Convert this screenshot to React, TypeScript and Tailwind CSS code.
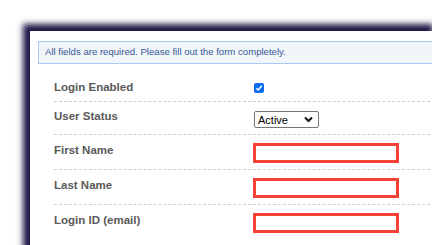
import { useState } from "react";

function Checkbox() {
  return (
    <span className="flex h-[10px] w-[10px] items-center justify-center rounded-[2px] bg-[#0b6ff0]">
      <svg width="8" height="8" viewBox="0 0 8 8">
        <path d="M1.3 4.2 L3.2 6 L6.8 1.8" fill="none" stroke="#fff" strokeWidth="1.5" />
      </svg>
    </span>
  );
}

function StatusSelect() {
  return (
    <div className="relative h-[17px] w-[65px] rounded-[2px] border border-[#767676] bg-white font-normal">
      <span className="absolute left-[3px] top-[1px] text-[11px] leading-[14px] text-black">Active</span>
      <svg className="absolute right-[5px] top-[4px]" width="9" height="7" viewBox="0 0 9 7">
        <path d="M1 1.5 L4.5 5 L8 1.5" fill="none" stroke="#111" strokeWidth="2" />
      </svg>
    </div>
  );
}

function TextField() {
  const [value, setValue] = useState("");
  return (
    <input
      value={value}
      onChange={(e) => setValue(e.target.value)}
      className="block h-[20px] w-[146px] border-[3px] border-[#f44336] bg-white px-1 text-[11px] font-normal outline-none"
    />
  );
}

const rows = [
  { label: "First Name" },
  { label: "Last Name" },
  { label: "Login ID (email)" },
];

export default function App() {
  return (
    <div className="h-[245px] w-[432px] overflow-hidden bg-white pl-[30px] pt-[31px] font-['Liberation_Sans',Arial,sans-serif]">
      <div className="h-[230px] w-[410px] bg-white pl-[8px] pt-[10px] shadow-[-7px_-7px_6px_#1d1846]">
        {/* notice */}
        <div className="flex h-[23px] w-[420px] items-center border border-[#a9c8f5] bg-[#f1f6fb] pl-[6px] text-[9.6px] text-[#3a5796]">
          All fields are required. Please fill out the form completely.
        </div>

        <div className="ml-[16px] mt-[7px] text-[11.5px] font-bold text-[#595959]">
          <div className="flex h-[31px] items-start border-b border-dashed border-[#cfcfcf]">
            <div className="w-[200px] pt-[9px] leading-[14px]">Login Enabled</div>
            <div className="pt-[12px]">
              <Checkbox />
            </div>
          </div>
          <div className="flex h-[33px] items-start border-b border-dashed border-[#cfcfcf]">
            <div className="w-[200px] pt-[7px] leading-[14px]">User Status</div>
            <div className="pt-[9px]">
              <StatusSelect />
            </div>
          </div>
          {rows.map((r, i) => (
            <div
              key={r.label}
              className={
                "flex h-[35px] items-start " +
                (i < rows.length - 1 ? "border-b border-dashed border-[#cfcfcf]" : "")
              }
            >
              <div className="w-[199px] pt-[8px] leading-[14px]">{r.label}</div>
              <div className="pt-[8px]">
                <TextField />
              </div>
            </div>
          ))}
        </div>
      </div>
    </div>
  );
}
